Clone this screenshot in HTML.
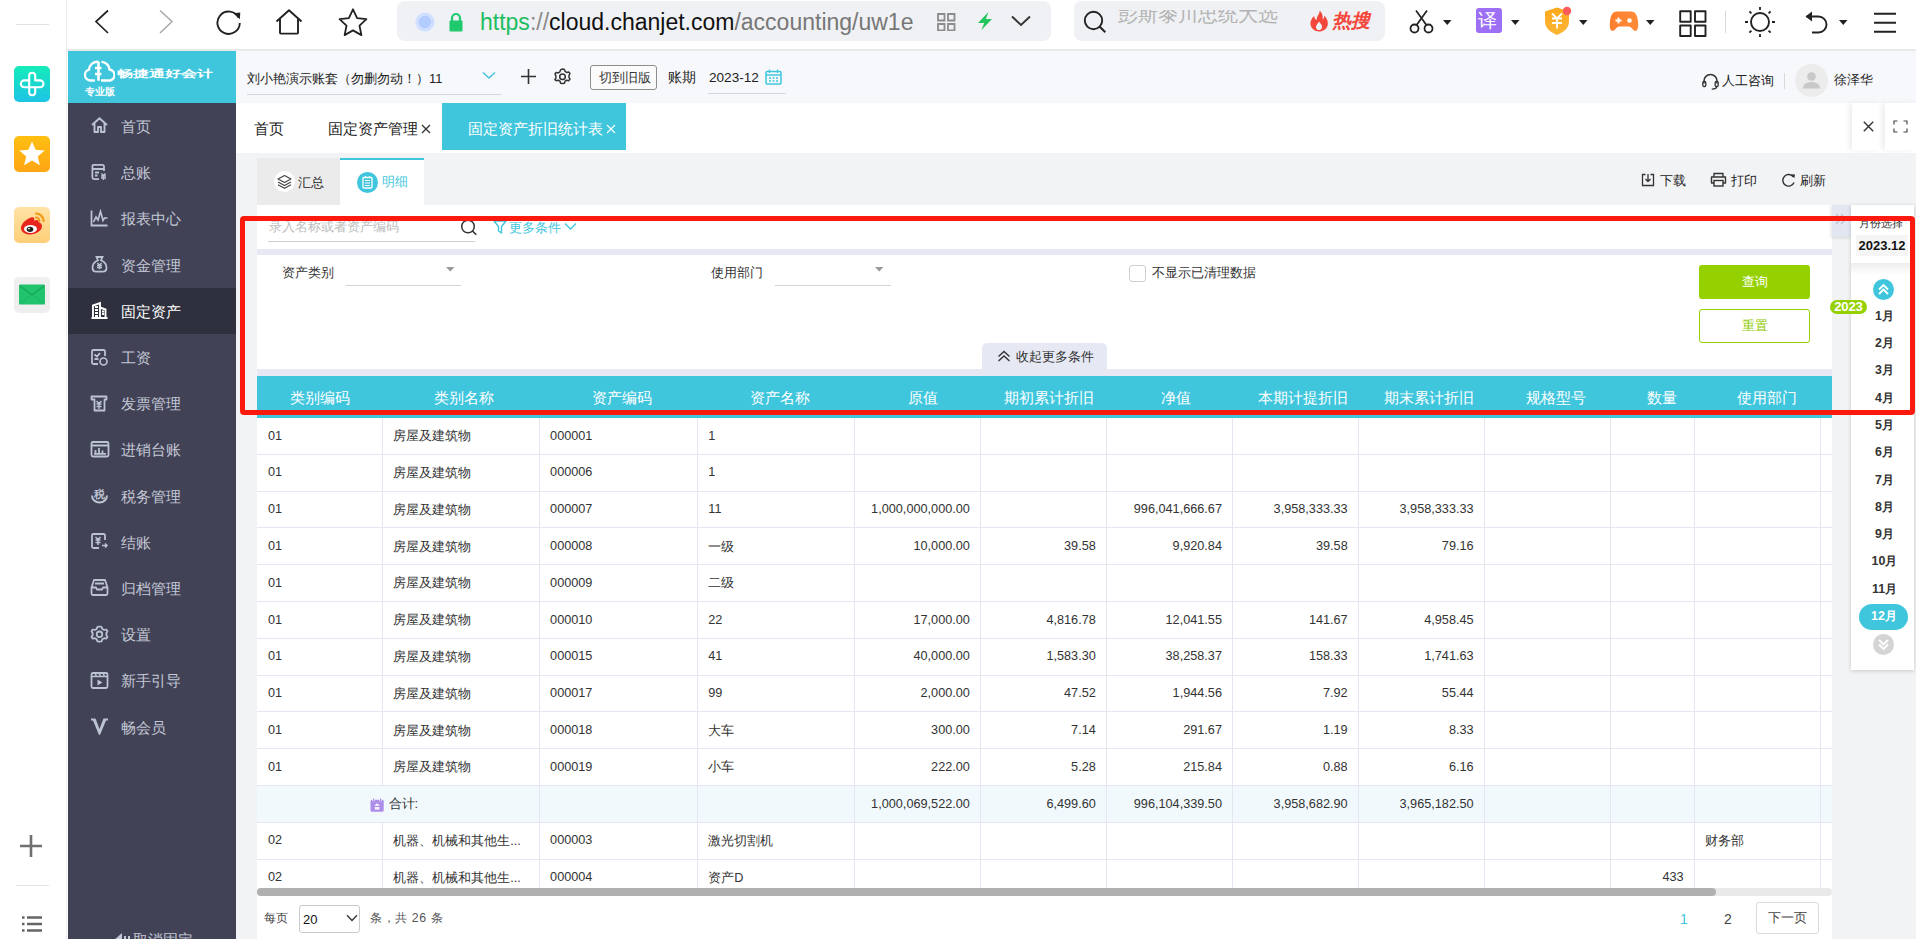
<!DOCTYPE html><html><head><meta charset="utf-8"><style>
*{margin:0;padding:0;box-sizing:border-box}
html,body{width:1916px;height:939px;overflow:hidden;background:#fff;font-family:"Liberation Sans",sans-serif}
.a{position:absolute;display:block}
.t{position:absolute;white-space:nowrap}
</style></head><body>

<div class="a" style="left:0px;top:0px;width:66px;height:939px;background:#fff"></div>
<div class="a" style="left:66px;top:0px;width:1px;height:939px;background:#ececec"></div>
<div class="a" style="left:16px;top:24px;width:33px;height:1px;background:#e3e3e3"></div>
<svg class="a" style="left:14px;top:66px;" width="36" height="36" viewBox="0 0 36 36" fill="none"><defs><linearGradient id="g1" x1="0" y1="0" x2="0" y2="1"><stop offset="0" stop-color="#14ecb9"/><stop offset="1" stop-color="#1ec3e6"/></linearGradient></defs>
<rect width="36" height="36" rx="5" fill="url(#g1)"/>
<path d="M15.2 14.4H10.2A3.4 3.4 0 0 0 10.2 21.2H26.1A3.4 3.4 0 0 0 26.1 14.4H21.2V9.7A3 3 0 0 0 15.2 9.7V26.2A3 3 0 0 0 21.2 26.2V21.2" stroke="#fff" stroke-width="2.1" stroke-linejoin="round"/></svg>
<svg class="a" style="left:14px;top:136px;" width="36" height="36" viewBox="0 0 36 36" fill="none"><defs><linearGradient id="g2" x1="0" y1="0" x2="0" y2="1"><stop offset="0" stop-color="#ffbf10"/><stop offset="1" stop-color="#ffa516"/></linearGradient></defs>
<rect width="36" height="36" rx="5" fill="url(#g2)"/>
<path d="M18 5.5l3.6 8.3 9 .8-6.8 5.9 2.1 8.8L18 24.6l-7.9 4.7 2.1-8.8-6.8-5.9 9-.8z" fill="#fff"/></svg>
<svg class="a" style="left:14px;top:207px;" width="36" height="36" viewBox="0 0 36 36" fill="none"><defs><linearGradient id="g3" x1="0" y1="0" x2="0" y2="1"><stop offset="0" stop-color="#ffe3a6"/><stop offset="1" stop-color="#ffcf78"/></linearGradient></defs>
<rect width="36" height="36" rx="5" fill="url(#g3)"/>
<path d="M7 21c0-4 5-9 10-10.5 3-.8 4 .8 3 3.2 3-1.2 5-.6 4.6 1.6 2.4.6 3.4 2 3.4 3.8C28 24 22 27.5 16 27.5 11 27.5 7 25 7 21z" fill="#e8251c"/>
<ellipse cx="16.5" cy="22" rx="6.5" ry="4" fill="#fff"/>
<ellipse cx="16" cy="22.3" rx="3.3" ry="2.6" fill="#222"/>
<circle cx="15" cy="21.6" r="0.9" fill="#fff"/>
<path d="M22 6.5c4 0 7.5 3.2 7.5 7.5" stroke="#f39a18" stroke-width="2.2" stroke-linecap="round"/>
<path d="M22 10.5c1.8 0 3.4 1.4 3.4 3.4" stroke="#f39a18" stroke-width="2" stroke-linecap="round"/></svg>
<svg class="a" style="left:14px;top:277px;" width="36" height="36" viewBox="0 0 36 36" fill="none"><rect width="36" height="36" rx="5" fill="#efefef"/>
<rect x="5" y="7.5" width="26" height="20" rx="1.5" fill="#21c46c"/>
<path d="M5.5 8.5l12.5 9.5 12.5-9.5" stroke="#15a458" stroke-width="1.2"/>
<path d="M5.5 27l10-8M30.5 27l-10-8" stroke="#1cb562" stroke-width="1"/></svg>
<svg class="a" style="left:20px;top:835px;" width="22" height="22" viewBox="0 0 22 22" fill="none"><path d="M11 0v22M0 11h22" stroke="#707070" stroke-width="2.6"/></svg>
<div class="a" style="left:16px;top:885px;width:33px;height:1px;background:#e3e3e3"></div>
<svg class="a" style="left:22px;top:916px;" width="20" height="16" viewBox="0 0 20 16" fill="none"><path d="M0 1.5h2.5M0 8h2.5M0 14.5h2.5M5 1.5h15M5 8h15M5 14.5h15" stroke="#666" stroke-width="2.4"/></svg>
<div class="a" style="left:67px;top:0px;width:1849px;height:49px;background:#fff"></div>
<div class="a" style="left:67px;top:49px;width:1849px;height:2px;background:#e9e9e9"></div>
<svg class="a" style="left:90px;top:8px;" width="24" height="28" viewBox="0 0 24 28" fill="none"><path d="M18 2.5L6 13.5 18 25" stroke="#222" stroke-width="1.7"/></svg>
<svg class="a" style="left:154px;top:8px;" width="24" height="28" viewBox="0 0 24 28" fill="none"><path d="M6 2.5L18 13.5 6 25" stroke="#a8a8a8" stroke-width="1.5"/></svg>
<svg class="a" style="left:213px;top:8px;" width="30" height="28" viewBox="0 0 30 28" fill="none"><path d="M25.5 9.5A11.2 11.2 0 1 0 26.8 15" stroke="#222" stroke-width="1.9"/><path d="M20.5 5.2l6.8-.8-.4 6.9z" fill="#222"/></svg>
<svg class="a" style="left:273px;top:8px;" width="32" height="28" viewBox="0 0 32 28" fill="none"><path d="M3.5 13.5L16 2.2l12.5 11.3M7 11v13.8c0 .5.3.8.8.8h16.4c.5 0 .8-.3.8-.8V11" stroke="#222" stroke-width="1.9" stroke-linejoin="round"/></svg>
<svg class="a" style="left:337px;top:7px;" width="32" height="30" viewBox="0 0 32 30" fill="none"><path d="M16 2.3l4.1 8.8 9.3 1.1-6.9 6.5 1.9 9.4L16 23.4l-8.4 4.7 1.9-9.4-6.9-6.5 9.3-1.1z" stroke="#222" stroke-width="1.8" stroke-linejoin="round"/></svg>
<div class="a" style="left:397px;top:1px;width:654px;height:40px;background:#f0f1f4;border-radius:8px"></div>
<svg class="a" style="left:414px;top:11px;" width="22" height="22" viewBox="0 0 22 22" fill="none"><circle cx="11" cy="11" r="10" fill="#dce7ff"/><circle cx="11" cy="11" r="8" stroke="#c3d6ff" stroke-width="1"/><circle cx="11" cy="11" r="6.5" fill="#b3ccff"/></svg>
<svg class="a" style="left:448px;top:11px;" width="16" height="22" viewBox="0 0 16 22" fill="none"><path d="M4 10V7a4 4 0 0 1 8 0v3" stroke="#1fc96e" stroke-width="2.2"/><rect x="1.5" y="9.5" width="13" height="11" rx="1" fill="#1fc96e"/></svg>
<div class="t " style="left:480px;top:9px;font-size:23px;line-height:26px;color:#111;width:439px;overflow:hidden;letter-spacing:0px"><span style="color:#1cbd60">https</span><span style="color:#8a8a8a">://</span><span style="color:#111">cloud.chanjet.com</span><span style="color:#777">/accounting/uw1e</span></div>
<svg class="a" style="left:937px;top:13px;" width="19" height="18" viewBox="0 0 19 18" fill="none"><path d="M1 1h6.5v6.5H1zM11 1h6.5v6.5H11zM1 11h6.5v6.5H1zM11 11h6.5v6.5H11z" stroke="#8c8c8c" stroke-width="1.8"/></svg>
<svg class="a" style="left:975px;top:11px;" width="20" height="20" viewBox="0 0 20 20" fill="none"><path d="M13.5 1L3 12h6.2L6.5 19 17 8h-6.2z" fill="#22c55e"/></svg>
<svg class="a" style="left:1010px;top:14px;" width="22" height="14" viewBox="0 0 22 14" fill="none"><path d="M2 2.5l9 8.5 9-8.5" stroke="#333" stroke-width="1.9"/></svg>
<div class="a" style="left:1074px;top:1px;width:311px;height:40px;background:#f0f1f4;border-radius:8px"></div>
<svg class="a" style="left:1082px;top:9px;" width="26" height="26" viewBox="0 0 26 26" fill="none"><circle cx="11.5" cy="11.5" r="8.7" stroke="#222" stroke-width="1.9"/><path d="M17.8 17.8l5.5 5.5" stroke="#222" stroke-width="2"/></svg>
<div class="a" style="left:1114px;top:9.5px;width:170px;height:16px;overflow:hidden"><div class="t" style="left:3.5px;top:-6.5px;font-size:19.5px;line-height:22px;color:#b3b3b3">彭斯黍川忠统大选</div></div>
<svg class="a" style="left:1307px;top:9px;" width="24" height="24" viewBox="0 0 24 24" fill="none"><path d="M12.5 1.5c.8 3.8-3.4 5.3-2.6 9.5-2.3-.6-2.8-2.8-2.6-4.3C4.6 9.2 3 12.6 3.5 15.6 4.2 20 8 22.5 12 22.5s8.2-2.6 8.8-7c.6-4.6-2.2-7.6-3.6-9.1.1 1.8-.4 3.3-1.5 4 .5-4-1-7.4-3.2-8.9zm-.4 11c1 2 3.3 3 2.9 6-.3 1.6-1.6 2.6-3 2.6s-2.8-1-3-2.6c-.3-2.4 1.8-3.6 3.1-6z" fill="#f4473b"/></svg>
<div class="t " style="left:1332px;top:10px;font-size:19px;line-height:22px;color:#f4473b;font-weight:bold;font-style:italic">热搜</div>
<svg class="a" style="left:1409px;top:9px;" width="28" height="26" viewBox="0 0 28 26" fill="none"><circle cx="5.5" cy="19.5" r="4" stroke="#222" stroke-width="1.8"/><circle cx="19.5" cy="19.5" r="4" stroke="#222" stroke-width="1.8"/><path d="M7.6 16L18 1.5M17.4 16L7 1.5" stroke="#222" stroke-width="1.7"/></svg>
<svg class="a" style="left:1443px;top:20px;" width="9" height="6" viewBox="0 0 9 6" fill="none"><path d="M0 0h8.5L4.25 5z" fill="#222"/></svg>
<div class="a" style="left:1476px;top:8px;width:26px;height:25px;background:#9d6ff5;border-radius:3px"></div>
<div class="t " style="left:1478px;top:10px;font-size:19px;line-height:21px;color:#fff;">译</div>
<svg class="a" style="left:1511px;top:20px;" width="9" height="6" viewBox="0 0 9 6" fill="none"><path d="M0 0h8.5L4.25 5z" fill="#222"/></svg>
<svg class="a" style="left:1543px;top:6px;" width="30" height="30" viewBox="0 0 30 30" fill="none"><defs><linearGradient id="g4" x1="0" y1="0" x2="0" y2="1"><stop offset="0" stop-color="#ffa91c"/><stop offset="1" stop-color="#fbb535"/></linearGradient></defs><path d="M2 5.5L14 1.5l12 4v10c0 7-6 11-12 13.5C8 26.5 2 22.5 2 15.5z" fill="url(#g4)"/><path d="M9 7.5l5 5 5-5M9 12.5h10M9 17h10M14 12.5v10" stroke="#fff" stroke-width="1.8"/><circle cx="24" cy="5" r="4.2" fill="#ff5b5b"/></svg>
<svg class="a" style="left:1579px;top:20px;" width="9" height="6" viewBox="0 0 9 6" fill="none"><path d="M0 0h8.5L4.25 5z" fill="#222"/></svg>
<svg class="a" style="left:1609px;top:10px;" width="30" height="23" viewBox="0 0 30 23" fill="none"><defs><linearGradient id="g5" x1="0" y1="0" x2="1" y2="0"><stop offset="0" stop-color="#ff7e2e"/><stop offset="1" stop-color="#ff8c3a"/></linearGradient></defs><path d="M8 1.5h14c4 0 6 3 6.8 8.5.8 5.5.5 11-2.5 11-2.3 0-3.8-4.5-6.3-4.5H10c-2.5 0-4 4.5-6.3 4.5-3 0-3.3-5.5-2.5-11C2 4.5 4 1.5 8 1.5z" fill="url(#g5)"/><path d="M6.5 10.5h6M9.5 7.5v6" stroke="#fff" stroke-width="1.9"/><circle cx="20.5" cy="10.5" r="2.3" fill="#fff"/></svg>
<svg class="a" style="left:1646px;top:20px;" width="9" height="6" viewBox="0 0 9 6" fill="none"><path d="M0 0h8.5L4.25 5z" fill="#222"/></svg>
<svg class="a" style="left:1679px;top:10px;" width="28" height="27" viewBox="0 0 28 27" fill="none"><path d="M1.2 1.2h10.5v10.5H1.2zM16 1.2h10.5v10.5H16zM1.2 15.5h10.5V26H1.2zM16 15.5h10.5V26H16z" stroke="#222" stroke-width="1.9" stroke-linejoin="round"/></svg>
<div class="a" style="left:1725px;top:11px;width:1px;height:22px;background:#d8d8d8"></div>
<svg class="a" style="left:1745px;top:7px;" width="30" height="30" viewBox="0 0 30 30" fill="none"><circle cx="15" cy="15" r="9" stroke="#222" stroke-width="1.9"/><path d="M15 0v3M15 27v3M0 15h3M27 15h3M4.4 4.4l2 2M23.6 23.6l2 2M4.4 25.6l2-2M23.6 6.4l2-2" stroke="#222" stroke-width="1.8"/></svg>
<svg class="a" style="left:1803px;top:9px;" width="28" height="26" viewBox="0 0 28 26" fill="none"><path d="M3.5 7.5h12a8 8 0 0 1 0 16H9" stroke="#222" stroke-width="1.9"/><path d="M9 2.5L2.5 7.5 9 12.5z" fill="#222"/></svg>
<svg class="a" style="left:1839px;top:20px;" width="9" height="6" viewBox="0 0 9 6" fill="none"><path d="M0 0h8.5L4.25 5z" fill="#222"/></svg>
<svg class="a" style="left:1873px;top:12px;" width="24" height="22" viewBox="0 0 24 22" fill="none"><path d="M1 1.8h22M1 10.8h22M1 19.8h22" stroke="#222" stroke-width="1.9"/></svg>
<div class="a" style="left:68px;top:51px;width:168px;height:888px;background:#424257"></div>
<div class="a" style="left:68px;top:51px;width:168px;height:52px;background:#3fc6dd"></div>
<svg class="a" style="left:84px;top:60px;" width="31" height="22" viewBox="0 0 31 22" fill="none"><path d="M8 20.5H6.5A5.5 5.5 0 0 1 5 9.7 8.5 8.5 0 0 1 14.5 1.8M17.5 1.8A8.5 8.5 0 0 1 25.5 9.5 5.5 5.5 0 0 1 24.5 20.5H17" stroke="#fff" stroke-width="2.3"/><path d="M14.5 1.8v19M11 8h6.5M11 14h6.5" stroke="#fff" stroke-width="2.6"/><path d="M8 20.5h3" stroke="#fff" stroke-width="2.3"/></svg>
<div class="t " style="left:117px;top:64px;font-size:16.2px;line-height:18px;color:#fff;font-weight:bold;letter-spacing:0px;transform:scaleY(0.62);transform-origin:0 50%">畅捷通好会计</div>
<div class="t " style="left:85px;top:86px;font-size:10px;line-height:12px;color:#fff;font-weight:bold">专业版</div>
<svg class="a" style="left:90px;top:116px;" width="20" height="19" viewBox="0 0 20 19" fill="none"><path d="M2 9L9.5 2.2 17 9M4.5 7v9h3.5v-5h3v5h3.5V7" stroke="#bcc4d2" stroke-width="1.89" stroke-linejoin="round"/></svg>
<div class="t " style="left:121px;top:119.0px;font-size:14.7px;line-height:16px;color:#c3c8d4;">首页</div>
<svg class="a" style="left:90px;top:163px;" width="20" height="19" viewBox="0 0 20 19" fill="none"><path d="M14 8V3.5c0-1-.6-1.6-1.6-1.6H4c-1 0-1.6.6-1.6 1.6v11c0 1 .6 1.6 1.6 1.6h5M2.5 6h11.5M5 9.5h4M5 12.5h2.5" stroke="#bcc4d2" stroke-width="1.77"/><path d="M11.5 10.5l2 2 2-2M11 13h5M11 15h5M13.5 12.5V17" stroke="#bcc4d2" stroke-width="1.42"/></svg>
<div class="t " style="left:121px;top:165.2px;font-size:14.7px;line-height:16px;color:#c3c8d4;">总账</div>
<svg class="a" style="left:90px;top:209px;" width="20" height="19" viewBox="0 0 20 19" fill="none"><path d="M1.5 1.5v15h16" stroke="#bcc4d2" stroke-width="1.77"/><path d="M3.5 13l2.5-5 2 3 2.5-8.5 2.5 9 1.5-2.5h3" stroke="#bcc4d2" stroke-width="1.65"/></svg>
<div class="t " style="left:121px;top:211.4px;font-size:14.7px;line-height:16px;color:#c3c8d4;">报表中心</div>
<svg class="a" style="left:90px;top:255px;" width="20" height="19" viewBox="0 0 20 19" fill="none"><path d="M6.5 2h6l-1.5 3.2c3.5 1.5 5.5 4.5 5.5 7.5 0 2.5-1.6 4-4 4H6.5c-2.4 0-4-1.5-4-4 0-3 2-6 5.5-7.5z" stroke="#bcc4d2" stroke-width="1.77"/><path d="M7.5 8l2 2.2 2-2.2M7 10.5h5M7 12.5h5M9.5 10.2v4" stroke="#bcc4d2" stroke-width="1.42"/></svg>
<div class="t " style="left:121px;top:257.6px;font-size:14.7px;line-height:16px;color:#c3c8d4;">资金管理</div>
<div class="a" style="left:68px;top:287.8px;width:168px;height:46.2px;background:#2f303e"></div>
<svg class="a" style="left:90px;top:301px;" width="20" height="19" viewBox="0 0 20 19" fill="none"><path d="M3 17V4.5L10 2v15M10 6.5l5.5 2V17M1.5 17h16M5 6h3M5 9h3M5 12h3M12 10.5h2M12 13h2M5 15h3" stroke="#fff" stroke-width="1.89"/></svg>
<div class="t " style="left:121px;top:303.8px;font-size:14.7px;line-height:16px;color:#fff;">固定资产</div>
<svg class="a" style="left:90px;top:348px;" width="20" height="19" viewBox="0 0 20 19" fill="none"><path d="M15 8V3.5c0-1-.6-1.5-1.5-1.5h-10C2.5 2 2 2.5 2 3.5v11c0 1 .5 1.5 1.5 1.5H8M4.5 6.5l2.5 2 3-3.5M4.5 11h4" stroke="#bcc4d2" stroke-width="1.77"/><circle cx="13.5" cy="13.5" r="3.5" stroke="#bcc4d2" stroke-width="1.65"/></svg>
<div class="t " style="left:121px;top:350.0px;font-size:14.7px;line-height:16px;color:#c3c8d4;">工资</div>
<svg class="a" style="left:90px;top:394px;" width="20" height="19" viewBox="0 0 20 19" fill="none"><path d="M1.5 2.5h15v3h-2v11H4.5v-11h-3z" stroke="#bcc4d2" stroke-width="1.77" stroke-linejoin="round"/><path d="M6.5 7l2.5 2.5L11.5 7M6.5 10h5M6.5 12.5h5M9 9.5V15" stroke="#bcc4d2" stroke-width="1.42"/></svg>
<div class="t " style="left:121px;top:396.20000000000005px;font-size:14.7px;line-height:16px;color:#c3c8d4;">发票管理</div>
<svg class="a" style="left:90px;top:440px;" width="20" height="19" viewBox="0 0 20 19" fill="none"><rect x="1.5" y="2" width="17" height="14.5" rx="1.5" stroke="#bcc4d2" stroke-width="1.77"/><path d="M1.5 5.5h17M5.5 13.5V10M9 13.5V8M12.5 13.5v-3M4 13.8h12" stroke="#bcc4d2" stroke-width="1.77"/></svg>
<div class="t " style="left:121px;top:442.40000000000003px;font-size:14.7px;line-height:16px;color:#c3c8d4;">进销台账</div>
<svg class="a" style="left:90px;top:486px;" width="20" height="19" viewBox="0 0 20 19" fill="none"><path d="M2 9.5c0 4 3.2 7 7.5 7s7.5-3 7.5-7" stroke="#bcc4d2" stroke-width="1.9"/><text x="9.6" y="11.5" font-size="10.5" font-weight="bold" text-anchor="middle" fill="#bcc4d2">税</text></svg>
<div class="t " style="left:121px;top:488.6px;font-size:14.7px;line-height:16px;color:#c3c8d4;">税务管理</div>
<svg class="a" style="left:90px;top:532px;" width="20" height="19" viewBox="0 0 20 19" fill="none"><path d="M15 8V3.5C15 2.5 14.5 2 13.5 2h-10C2.5 2 2 2.5 2 3.5v11c0 1 .5 1.5 1.5 1.5H9" stroke="#bcc4d2" stroke-width="1.77"/><path d="M5.5 5l2.5 2.5L10.5 5M5.5 8h5M5.5 10.5h5M8 8v5M12 13.5h5M15 11.5l2 2-2 2" stroke="#bcc4d2" stroke-width="1.53"/></svg>
<div class="t " style="left:121px;top:534.8px;font-size:14.7px;line-height:16px;color:#c3c8d4;">结账</div>
<svg class="a" style="left:90px;top:578px;" width="20" height="19" viewBox="0 0 20 19" fill="none"><path d="M1.5 9.5L4 2h11l2.5 7.5v6c0 1-.5 1.5-1.5 1.5H3c-1 0-1.5-.5-1.5-1.5z M1.5 9.5h4.5l1 2h5l1-2h4.5M5 5.5h9" stroke="#bcc4d2" stroke-width="1.77" stroke-linejoin="round"/></svg>
<div class="t " style="left:121px;top:581.0px;font-size:14.7px;line-height:16px;color:#c3c8d4;">归档管理</div>
<svg class="a" style="left:90px;top:625px;" width="20" height="19" viewBox="0 0 20 19" fill="none"><path d="M9.5 1.5l2 .4.8 2 1.9 1.1 2-.5 1.3 1.7-1.1 1.8v2.2l1.1 1.8-1.3 1.7-2-.5-1.9 1.1-.8 2-2 .4-2-.4-.8-2-1.9-1.1-2 .5L1.5 12l1.1-1.8V8L1.5 6.2l1.3-1.7 2 .5 1.9-1.1.8-2z" stroke="#bcc4d2" stroke-width="1.77" stroke-linejoin="round"/><circle cx="9.5" cy="9.3" r="2.8" stroke="#bcc4d2" stroke-width="1.77"/></svg>
<div class="t " style="left:121px;top:627.2px;font-size:14.7px;line-height:16px;color:#c3c8d4;">设置</div>
<svg class="a" style="left:90px;top:671px;" width="20" height="19" viewBox="0 0 20 19" fill="none"><rect x="1.5" y="2" width="16" height="15" rx="1.5" stroke="#bcc4d2" stroke-width="1.77"/><path d="M1.5 5.5h16M5 2l1.5 3.5M9 2l1.5 3.5M13 2l1.5 3.5" stroke="#bcc4d2" stroke-width="1.53"/><path d="M7.5 8.5v6l5-3z" fill="#bcc4d2"/></svg>
<div class="t " style="left:121px;top:673.4000000000001px;font-size:14.7px;line-height:16px;color:#c3c8d4;">新手引导</div>
<svg class="a" style="left:90px;top:717px;" width="20" height="19" viewBox="0 0 20 19" fill="none"><path d="M1 2.5h4l4.5 12 4.5-12h4M3.5 2.5l6 14.5 6-14.5" stroke="#bcc4d2" stroke-width="1.77" stroke-linejoin="round"/></svg>
<div class="t " style="left:121px;top:719.6px;font-size:14.7px;line-height:16px;color:#c3c8d4;">畅会员</div>
<div class="a" style="left:68px;top:925px;width:168px;height:14px;overflow:hidden"><svg class="a" style="left:45px;top:8px" width="20" height="16" viewBox="0 0 20 16"><path d="M0 8L9 0v16z" fill="#c3c8d4"/><rect x="11" y="3" width="2" height="3" fill="#c3c8d4"/><rect x="15" y="3" width="2" height="3" fill="#c3c8d4"/></svg><div class="t" style="left:65px;top:6.5px;font-size:14.7px;line-height:16px;color:#c3c8d4">取消固定</div></div>
<div class="a" style="left:236px;top:51px;width:1680px;height:52px;background:#f7f8fb"></div>
<div class="t " style="left:247px;top:71px;font-size:12.9px;line-height:15px;color:#222;">刘小艳演示账套（勿删勿动！）11</div>
<div class="a" style="left:247px;top:94px;width:255px;height:1px;background:#d5d7dc"></div>
<svg class="a" style="left:482px;top:71px;" width="14" height="9" viewBox="0 0 14 9" fill="none"><path d="M1 1.5l6 5.5 6-5.5" stroke="#3fc6dd" stroke-width="1.5"/></svg>
<svg class="a" style="left:521px;top:69px;" width="15" height="15" viewBox="0 0 15 15" fill="none"><path d="M7.5 0v15M0 7.5h15" stroke="#333" stroke-width="1.6"/></svg>
<svg class="a" style="left:553px;top:68px;" width="19" height="18" viewBox="0 0 19 18" fill="none"><path d="M9.5 1l1.9.4.6 2 1.7 1 2-.5 1.3 1.6-1 1.8v2l1 1.8-1.3 1.6-2-.5-1.7 1-.6 2-1.9.4-1.9-.4-.6-2-1.7-1-2 .5L1.9 11.6l1-1.8v-2l-1-1.8L3.2 4.4l2 .5 1.7-1 .6-2z" stroke="#333" stroke-width="1.5" stroke-linejoin="round"/><circle cx="9.5" cy="8.8" r="2.8" stroke="#333" stroke-width="1.5"/></svg>
<div class="a" style="left:590px;top:65px;width:67px;height:25px;border:1px solid #8e8e8e;border-radius:3px;background:#fbfbfc"></div>
<div class="t " style="left:599px;top:70.5px;font-size:12.6px;line-height:15px;color:#333;">切到旧版</div>
<div class="t " style="left:668px;top:69px;font-size:14px;line-height:16px;color:#222;">账期</div>
<div class="t " style="left:709px;top:69.5px;font-size:13.6px;line-height:16px;color:#222;">2023-12</div>
<div class="a" style="left:708px;top:93px;width:78px;height:1px;background:#d5d7dc"></div>
<svg class="a" style="left:765px;top:69px;" width="17" height="16" viewBox="0 0 17 16" fill="none"><rect x="1" y="2.5" width="15" height="12.5" rx="1" stroke="#3fc6dd" stroke-width="1.5"/><path d="M1 6h15M4.5 0.5v3.5M12.5 .5v3.5M4 9h2M7.5 9h2M11 9h2M4 12h2M7.5 12h2M11 12h2" stroke="#3fc6dd" stroke-width="1.3"/></svg>
<svg class="a" style="left:1702px;top:73px;" width="17" height="17" viewBox="0 0 17 17" fill="none"><path d="M2 10.5V8a6.5 6.5 0 0 1 13 0v2.5" stroke="#333" stroke-width="1.5"/><rect x="0.8" y="8.5" width="3" height="5" rx="1.2" stroke="#333" stroke-width="1.3"/><rect x="13.2" y="8.5" width="3" height="5" rx="1.2" stroke="#333" stroke-width="1.3"/><path d="M14.7 13.5c0 2-2 2.6-5 2.6" stroke="#333" stroke-width="1.3"/></svg>
<div class="t " style="left:1722px;top:73px;font-size:13px;line-height:15px;color:#222;">人工咨询</div>
<div class="a" style="left:1784px;top:73px;width:1px;height:16px;background:#d8d8d8"></div>
<div class="a" style="left:1795px;top:64px;width:33px;height:33px;border-radius:50%;background:#ececec;overflow:hidden"></div>
<svg class="a" style="left:1802px;top:71px;" width="19" height="18" viewBox="0 0 19 18" fill="none"><circle cx="9.5" cy="5.5" r="4.3" fill="#c8c8c8"/><path d="M1 17.5c0-4.2 3.5-6.5 8.5-6.5s8.5 2.3 8.5 6.5z" fill="#c8c8c8"/></svg>
<div class="t " style="left:1834px;top:72px;font-size:13px;line-height:15px;color:#222;">徐泽华</div>
<div class="a" style="left:236px;top:103px;width:1680px;height:50px;background:#fff"></div>
<div class="t " style="left:254px;top:121px;font-size:14.7px;line-height:16px;color:#222;">首页</div>
<div class="t " style="left:327.5px;top:121px;font-size:14.7px;line-height:16px;color:#222;">固定资产管理</div>
<svg class="a" style="left:421px;top:123.5px;" width="10" height="10" viewBox="0 0 10 10" fill="none"><path d="M1 1l8 8M9 1L1 9" stroke="#333" stroke-width="1.3"/></svg>
<div class="a" style="left:442px;top:103px;width:184px;height:47px;background:#3fc6dd"></div>
<div class="t " style="left:467.5px;top:121px;font-size:14.7px;line-height:16px;color:#fff;">固定资产折旧统计表</div>
<svg class="a" style="left:606px;top:123.5px;" width="10" height="10" viewBox="0 0 10 10" fill="none"><path d="M1 1l8 8M9 1L1 9" stroke="#fff" stroke-width="1.1"/></svg>
<div class="a" style="left:1852px;top:103px;width:28px;height:47px;background:#fff;box-shadow:-3px 0 5px rgba(0,0,0,0.07)"></div>
<svg class="a" style="left:1863px;top:121px;" width="11" height="11" viewBox="0 0 11 11" fill="none"><path d="M.8.8l9.4 9.4M10.2.8L.8 10.2" stroke="#333" stroke-width="1.4"/></svg>
<div class="a" style="left:1885px;top:103px;width:31px;height:47px;background:#fff;box-shadow:-3px 0 5px rgba(0,0,0,0.07)"></div>
<svg class="a" style="left:1893px;top:120px;" width="15" height="13" viewBox="0 0 15 13" fill="none"><path d="M1 4.5V1h3.5M10.5 1H14v3.5M14 8.5V12h-3.5M4.5 12H1V8.5" stroke="#444" stroke-width="1.15"/></svg>
<div class="a" style="left:236px;top:153px;width:1680px;height:786px;background:#f2f3f5"></div>
<div class="a" style="left:257px;top:158px;width:83px;height:47px;background:#ebebeb"></div>
<div class="a" style="left:340px;top:158px;width:84px;height:47px;background:#fff;border-top:2px solid #3fc6dd"></div>
<div class="a" style="left:274px;top:171px;width:21px;height:21px;border-radius:50%;background:#fff"></div>
<svg class="a" style="left:277px;top:174px;" width="15" height="15" viewBox="0 0 15 15" fill="none"><path d="M7.5 1.5L14 5 7.5 8.5 1 5z" stroke="#444" stroke-width="1.2" stroke-linejoin="round"/><path d="M1 8l6.5 3.5L14 8M1 10.8l6.5 3.5 6.5-3.5" stroke="#444" stroke-width="1.2" stroke-linejoin="round"/></svg>
<div class="t " style="left:298px;top:174.5px;font-size:12.9px;line-height:15px;color:#222;">汇总</div>
<div class="a" style="left:357px;top:172px;width:21px;height:21px;border-radius:50%;background:#3fc6dd"></div>
<svg class="a" style="left:362px;top:176px;" width="11" height="13" viewBox="0 0 11 13" fill="none"><rect x="1" y="1.5" width="9" height="10.5" rx="1" stroke="#fff" stroke-width="1.3"/><path d="M3 4.5h5M3 7h5M3 9.5h5M3.5 0v2M7.5 0v2" stroke="#fff" stroke-width="1.1"/></svg>
<div class="t " style="left:381.5px;top:174.5px;font-size:12.6px;line-height:15px;color:#3fc6dd;">明细</div>
<svg class="a" style="left:1641px;top:173px;" width="14" height="14" viewBox="0 0 14 14" fill="none"><path d="M4.5 1.5H1.5v11h11v-11h-3M7 1v7.5M4.5 6L7 8.5 9.5 6" stroke="#333" stroke-width="1.3"/></svg>
<div class="t " style="left:1660px;top:173.5px;font-size:12.6px;line-height:15px;color:#222;">下载</div>
<svg class="a" style="left:1710px;top:172px;" width="17" height="15" viewBox="0 0 17 15" fill="none"><path d="M4 5V1.5h9V5M4 11H1.5V5h14v6H13" stroke="#333" stroke-width="1.4" stroke-linejoin="round"/><rect x="4" y="8.5" width="9" height="5.5" stroke="#333" stroke-width="1.4"/></svg>
<div class="t " style="left:1730.5px;top:173.5px;font-size:12.6px;line-height:15px;color:#222;">打印</div>
<svg class="a" style="left:1781px;top:173px;" width="15" height="14" viewBox="0 0 15 14" fill="none"><path d="M12.5 4.2A5.8 5.8 0 1 0 13 9.5" stroke="#333" stroke-width="1.4"/><path d="M10 1.2l4 .2-.6 3.9z" fill="#333"/></svg>
<div class="t " style="left:1799.5px;top:173.5px;font-size:12.6px;line-height:15px;color:#222;">刷新</div>
<div class="a" style="left:257px;top:205px;width:1575px;height:734px;background:#fff"></div>
<div class="a" style="left:268px;top:217px;width:180px;height:24px;overflow:hidden"><div class="t" style="left:1px;top:2.5px;font-size:12.7px;line-height:15px;color:#bdbdbd">录入名称或者资产编码</div></div>
<div class="a" style="left:268px;top:241px;width:207px;height:1px;background:#cfcfcf"></div>
<svg class="a" style="left:460px;top:219px;" width="19" height="17" viewBox="0 0 19 17" fill="none"><circle cx="8" cy="7.5" r="6.3" stroke="#333" stroke-width="1.5"/><path d="M12.5 12l3.8 3.8" stroke="#333" stroke-width="1.6"/></svg>
<svg class="a" style="left:493px;top:220px;" width="14" height="14" viewBox="0 0 14 14" fill="none"><path d="M1 1h12L8.5 6.5V13L5.5 11V6.5z" stroke="#3fc6dd" stroke-width="1.4" stroke-linejoin="round"/></svg>
<div class="t " style="left:509px;top:220px;font-size:13px;line-height:15px;color:#3fc6dd;">更多条件</div>
<svg class="a" style="left:564px;top:222px;" width="13" height="9" viewBox="0 0 13 9" fill="none"><path d="M1 1.5L6.5 7 12 1.5" stroke="#3fc6dd" stroke-width="1.4"/></svg>
<div class="a" style="left:257px;top:249px;width:1575px;height:6px;background:#e6e9f3"></div>
<div class="t " style="left:281.5px;top:266px;font-size:12.6px;line-height:15px;color:#333;">资产类别</div>
<div class="a" style="left:346px;top:285px;width:115px;height:1px;background:#d4d4d4"></div>
<svg class="a" style="left:446px;top:267px;" width="9" height="6" viewBox="0 0 9 6" fill="none"><path d="M0 0h8.5L4.25 4.5z" fill="#9a9a9a"/></svg>
<div class="t " style="left:710.5px;top:266px;font-size:12.6px;line-height:15px;color:#333;">使用部门</div>
<div class="a" style="left:775px;top:285px;width:116px;height:1px;background:#d4d4d4"></div>
<svg class="a" style="left:875px;top:267px;" width="9" height="6" viewBox="0 0 9 6" fill="none"><path d="M0 0h8.5L4.25 4.5z" fill="#9a9a9a"/></svg>
<div class="a" style="left:1129px;top:265px;width:17px;height:17px;border:1px solid #cfcfcf;border-radius:3px;background:#fff"></div>
<div class="t " style="left:1152px;top:266px;font-size:12.5px;line-height:15px;color:#333;">不显示已清理数据</div>
<div class="a" style="left:1699px;top:265px;width:111px;height:34px;background:#95d100;border-radius:3px"></div>
<div class="t " style="left:1699px;top:274px;font-size:13px;line-height:15px;color:#fff;width:111px;text-align:center">查询</div>
<div class="a" style="left:1699px;top:309px;width:111px;height:34px;border:1px solid #95d100;border-radius:3px;background:#fff"></div>
<div class="t " style="left:1699px;top:318px;font-size:13px;line-height:15px;color:#8fc900;width:111px;text-align:center">重置</div>
<div class="a" style="left:982px;top:343px;width:125px;height:26px;background:#e6e9f3;border-radius:5px 5px 0 0"></div>
<svg class="a" style="left:997px;top:350px;" width="14" height="12" viewBox="0 0 14 12" fill="none"><path d="M1.5 6.5L7 1.5l5.5 5M1.5 11L7 6l5.5 5" stroke="#333" stroke-width="1.4"/></svg>
<div class="t " style="left:1016px;top:349.5px;font-size:12.6px;line-height:15px;color:#333;">收起更多条件</div>
<div class="a" style="left:257px;top:369px;width:1575px;height:7px;background:#e6e9f3"></div>
<div class="a" style="left:257px;top:376px;width:1575px;height:42px;background:#3fc6dd"></div>
<div class="t " style="left:260.25px;top:389px;font-size:15px;line-height:17px;color:#fff;width:120px;text-align:center">类别编码</div>
<div class="t " style="left:403.5px;top:389px;font-size:15px;line-height:17px;color:#fff;width:120px;text-align:center">类别名称</div>
<div class="t " style="left:561.5px;top:389px;font-size:15px;line-height:17px;color:#fff;width:120px;text-align:center">资产编码</div>
<div class="t " style="left:720px;top:389px;font-size:15px;line-height:17px;color:#fff;width:120px;text-align:center">资产名称</div>
<div class="t " style="left:862.7px;top:389px;font-size:15px;line-height:17px;color:#fff;width:120px;text-align:center">原值</div>
<div class="t " style="left:989.2px;top:389px;font-size:15px;line-height:17px;color:#fff;width:120px;text-align:center">期初累计折旧</div>
<div class="t " style="left:1116.3px;top:389px;font-size:15px;line-height:17px;color:#fff;width:120px;text-align:center">净值</div>
<div class="t " style="left:1242.5px;top:389px;font-size:15px;line-height:17px;color:#fff;width:120px;text-align:center">本期计提折旧</div>
<div class="t " style="left:1369.3px;top:389px;font-size:15px;line-height:17px;color:#fff;width:120px;text-align:center">期末累计折旧</div>
<div class="t " style="left:1496.2px;top:389px;font-size:15px;line-height:17px;color:#fff;width:120px;text-align:center">规格型号</div>
<div class="t " style="left:1601.7px;top:389px;font-size:15px;line-height:17px;color:#fff;width:120px;text-align:center">数量</div>
<div class="t " style="left:1706.9px;top:389px;font-size:15px;line-height:17px;color:#fff;width:120px;text-align:center">使用部门</div>
<div class="a" style="left:257px;top:417.6px;width:1575px;height:470.4px;overflow:hidden">
<div class="t" style="left:11.0px;top:11.00px;font-size:12.7px;line-height:15px;color:#333">01</div>
<div class="t" style="left:136.2px;top:11.60px;font-size:12.7px;line-height:15px;color:#333">房屋及建筑物</div>
<div class="t" style="left:293.1px;top:11.00px;font-size:12.7px;line-height:15px;color:#333">000001</div>
<div class="t" style="left:451.3px;top:11.00px;font-size:12.7px;line-height:15px;color:#333">1</div>
<div class="a" style="left:0;top:36.30px;width:1575px;height:1px;background:#e4e7f2"></div>
<div class="t" style="left:11.0px;top:47.80px;font-size:12.7px;line-height:15px;color:#333">01</div>
<div class="t" style="left:136.2px;top:48.40px;font-size:12.7px;line-height:15px;color:#333">房屋及建筑物</div>
<div class="t" style="left:293.1px;top:47.80px;font-size:12.7px;line-height:15px;color:#333">000006</div>
<div class="t" style="left:451.3px;top:47.80px;font-size:12.7px;line-height:15px;color:#333">1</div>
<div class="a" style="left:0;top:73.10px;width:1575px;height:1px;background:#e4e7f2"></div>
<div class="t" style="left:11.0px;top:84.60px;font-size:12.7px;line-height:15px;color:#333">01</div>
<div class="t" style="left:136.2px;top:85.20px;font-size:12.7px;line-height:15px;color:#333">房屋及建筑物</div>
<div class="t" style="left:293.1px;top:84.60px;font-size:12.7px;line-height:15px;color:#333">000007</div>
<div class="t" style="left:451.3px;top:84.60px;font-size:12.7px;line-height:15px;color:#333">11</div>
<div class="t" style="left:597.5px;top:84.60px;width:115.4px;text-align:right;font-size:12.7px;line-height:15px;color:#333">1,000,000,000.00</div>
<div class="t" style="left:849.6px;top:84.60px;width:115.4px;text-align:right;font-size:12.7px;line-height:15px;color:#333">996,041,666.67</div>
<div class="t" style="left:975.8px;top:84.60px;width:114.9px;text-align:right;font-size:12.7px;line-height:15px;color:#333">3,958,333.33</div>
<div class="t" style="left:1101.5px;top:84.60px;width:115.1px;text-align:right;font-size:12.7px;line-height:15px;color:#333">3,958,333.33</div>
<div class="a" style="left:0;top:109.90px;width:1575px;height:1px;background:#e4e7f2"></div>
<div class="t" style="left:11.0px;top:121.40px;font-size:12.7px;line-height:15px;color:#333">01</div>
<div class="t" style="left:136.2px;top:122.00px;font-size:12.7px;line-height:15px;color:#333">房屋及建筑物</div>
<div class="t" style="left:293.1px;top:121.40px;font-size:12.7px;line-height:15px;color:#333">000008</div>
<div class="t" style="left:451.3px;top:122.00px;font-size:12.7px;line-height:15px;color:#333">一级</div>
<div class="t" style="left:597.5px;top:121.40px;width:115.4px;text-align:right;font-size:12.7px;line-height:15px;color:#333">10,000.00</div>
<div class="t" style="left:723.7px;top:121.40px;width:115.1px;text-align:right;font-size:12.7px;line-height:15px;color:#333">39.58</div>
<div class="t" style="left:849.6px;top:121.40px;width:115.4px;text-align:right;font-size:12.7px;line-height:15px;color:#333">9,920.84</div>
<div class="t" style="left:975.8px;top:121.40px;width:114.9px;text-align:right;font-size:12.7px;line-height:15px;color:#333">39.58</div>
<div class="t" style="left:1101.5px;top:121.40px;width:115.1px;text-align:right;font-size:12.7px;line-height:15px;color:#333">79.16</div>
<div class="a" style="left:0;top:146.70px;width:1575px;height:1px;background:#e4e7f2"></div>
<div class="t" style="left:11.0px;top:158.20px;font-size:12.7px;line-height:15px;color:#333">01</div>
<div class="t" style="left:136.2px;top:158.80px;font-size:12.7px;line-height:15px;color:#333">房屋及建筑物</div>
<div class="t" style="left:293.1px;top:158.20px;font-size:12.7px;line-height:15px;color:#333">000009</div>
<div class="t" style="left:451.3px;top:158.80px;font-size:12.7px;line-height:15px;color:#333">二级</div>
<div class="a" style="left:0;top:183.50px;width:1575px;height:1px;background:#e4e7f2"></div>
<div class="t" style="left:11.0px;top:195.00px;font-size:12.7px;line-height:15px;color:#333">01</div>
<div class="t" style="left:136.2px;top:195.60px;font-size:12.7px;line-height:15px;color:#333">房屋及建筑物</div>
<div class="t" style="left:293.1px;top:195.00px;font-size:12.7px;line-height:15px;color:#333">000010</div>
<div class="t" style="left:451.3px;top:195.00px;font-size:12.7px;line-height:15px;color:#333">22</div>
<div class="t" style="left:597.5px;top:195.00px;width:115.4px;text-align:right;font-size:12.7px;line-height:15px;color:#333">17,000.00</div>
<div class="t" style="left:723.7px;top:195.00px;width:115.1px;text-align:right;font-size:12.7px;line-height:15px;color:#333">4,816.78</div>
<div class="t" style="left:849.6px;top:195.00px;width:115.4px;text-align:right;font-size:12.7px;line-height:15px;color:#333">12,041.55</div>
<div class="t" style="left:975.8px;top:195.00px;width:114.9px;text-align:right;font-size:12.7px;line-height:15px;color:#333">141.67</div>
<div class="t" style="left:1101.5px;top:195.00px;width:115.1px;text-align:right;font-size:12.7px;line-height:15px;color:#333">4,958.45</div>
<div class="a" style="left:0;top:220.30px;width:1575px;height:1px;background:#e4e7f2"></div>
<div class="t" style="left:11.0px;top:231.80px;font-size:12.7px;line-height:15px;color:#333">01</div>
<div class="t" style="left:136.2px;top:232.40px;font-size:12.7px;line-height:15px;color:#333">房屋及建筑物</div>
<div class="t" style="left:293.1px;top:231.80px;font-size:12.7px;line-height:15px;color:#333">000015</div>
<div class="t" style="left:451.3px;top:231.80px;font-size:12.7px;line-height:15px;color:#333">41</div>
<div class="t" style="left:597.5px;top:231.80px;width:115.4px;text-align:right;font-size:12.7px;line-height:15px;color:#333">40,000.00</div>
<div class="t" style="left:723.7px;top:231.80px;width:115.1px;text-align:right;font-size:12.7px;line-height:15px;color:#333">1,583.30</div>
<div class="t" style="left:849.6px;top:231.80px;width:115.4px;text-align:right;font-size:12.7px;line-height:15px;color:#333">38,258.37</div>
<div class="t" style="left:975.8px;top:231.80px;width:114.9px;text-align:right;font-size:12.7px;line-height:15px;color:#333">158.33</div>
<div class="t" style="left:1101.5px;top:231.80px;width:115.1px;text-align:right;font-size:12.7px;line-height:15px;color:#333">1,741.63</div>
<div class="a" style="left:0;top:257.10px;width:1575px;height:1px;background:#e4e7f2"></div>
<div class="t" style="left:11.0px;top:268.60px;font-size:12.7px;line-height:15px;color:#333">01</div>
<div class="t" style="left:136.2px;top:269.20px;font-size:12.7px;line-height:15px;color:#333">房屋及建筑物</div>
<div class="t" style="left:293.1px;top:268.60px;font-size:12.7px;line-height:15px;color:#333">000017</div>
<div class="t" style="left:451.3px;top:268.60px;font-size:12.7px;line-height:15px;color:#333">99</div>
<div class="t" style="left:597.5px;top:268.60px;width:115.4px;text-align:right;font-size:12.7px;line-height:15px;color:#333">2,000.00</div>
<div class="t" style="left:723.7px;top:268.60px;width:115.1px;text-align:right;font-size:12.7px;line-height:15px;color:#333">47.52</div>
<div class="t" style="left:849.6px;top:268.60px;width:115.4px;text-align:right;font-size:12.7px;line-height:15px;color:#333">1,944.56</div>
<div class="t" style="left:975.8px;top:268.60px;width:114.9px;text-align:right;font-size:12.7px;line-height:15px;color:#333">7.92</div>
<div class="t" style="left:1101.5px;top:268.60px;width:115.1px;text-align:right;font-size:12.7px;line-height:15px;color:#333">55.44</div>
<div class="a" style="left:0;top:293.90px;width:1575px;height:1px;background:#e4e7f2"></div>
<div class="t" style="left:11.0px;top:305.40px;font-size:12.7px;line-height:15px;color:#333">01</div>
<div class="t" style="left:136.2px;top:306.00px;font-size:12.7px;line-height:15px;color:#333">房屋及建筑物</div>
<div class="t" style="left:293.1px;top:305.40px;font-size:12.7px;line-height:15px;color:#333">000018</div>
<div class="t" style="left:451.3px;top:306.00px;font-size:12.7px;line-height:15px;color:#333">大车</div>
<div class="t" style="left:597.5px;top:305.40px;width:115.4px;text-align:right;font-size:12.7px;line-height:15px;color:#333">300.00</div>
<div class="t" style="left:723.7px;top:305.40px;width:115.1px;text-align:right;font-size:12.7px;line-height:15px;color:#333">7.14</div>
<div class="t" style="left:849.6px;top:305.40px;width:115.4px;text-align:right;font-size:12.7px;line-height:15px;color:#333">291.67</div>
<div class="t" style="left:975.8px;top:305.40px;width:114.9px;text-align:right;font-size:12.7px;line-height:15px;color:#333">1.19</div>
<div class="t" style="left:1101.5px;top:305.40px;width:115.1px;text-align:right;font-size:12.7px;line-height:15px;color:#333">8.33</div>
<div class="a" style="left:0;top:330.70px;width:1575px;height:1px;background:#e4e7f2"></div>
<div class="t" style="left:11.0px;top:342.20px;font-size:12.7px;line-height:15px;color:#333">01</div>
<div class="t" style="left:136.2px;top:342.80px;font-size:12.7px;line-height:15px;color:#333">房屋及建筑物</div>
<div class="t" style="left:293.1px;top:342.20px;font-size:12.7px;line-height:15px;color:#333">000019</div>
<div class="t" style="left:451.3px;top:342.80px;font-size:12.7px;line-height:15px;color:#333">小车</div>
<div class="t" style="left:597.5px;top:342.20px;width:115.4px;text-align:right;font-size:12.7px;line-height:15px;color:#333">222.00</div>
<div class="t" style="left:723.7px;top:342.20px;width:115.1px;text-align:right;font-size:12.7px;line-height:15px;color:#333">5.28</div>
<div class="t" style="left:849.6px;top:342.20px;width:115.4px;text-align:right;font-size:12.7px;line-height:15px;color:#333">215.84</div>
<div class="t" style="left:975.8px;top:342.20px;width:114.9px;text-align:right;font-size:12.7px;line-height:15px;color:#333">0.88</div>
<div class="t" style="left:1101.5px;top:342.20px;width:115.1px;text-align:right;font-size:12.7px;line-height:15px;color:#333">6.16</div>
<div class="a" style="left:0;top:367.50px;width:1575px;height:1px;background:#e4e7f2"></div>
<div class="a" style="left:0;top:368.00px;width:1575px;height:36.8px;background:#f1f9fd"></div>
<div class="t" style="left:597.5px;top:379.00px;width:115.4px;text-align:right;font-size:12.7px;line-height:15px;color:#333">1,000,069,522.00</div>
<div class="t" style="left:723.7px;top:379.00px;width:115.1px;text-align:right;font-size:12.7px;line-height:15px;color:#333">6,499.60</div>
<div class="t" style="left:849.6px;top:379.00px;width:115.4px;text-align:right;font-size:12.7px;line-height:15px;color:#333">996,104,339.50</div>
<div class="t" style="left:975.8px;top:379.00px;width:114.9px;text-align:right;font-size:12.7px;line-height:15px;color:#333">3,958,682.90</div>
<div class="t" style="left:1101.5px;top:379.00px;width:115.1px;text-align:right;font-size:12.7px;line-height:15px;color:#333">3,965,182.50</div>
<svg class="a" style="left:113px;top:380.70px" width="14" height="14" viewBox="0 0 14 14"><rect x="0.5" y="1.8" width="13.2" height="12" rx="1.5" fill="#ac8ee9"/><path d="M3.6 0.3v3M10.6 0.3v3" stroke="#fff" stroke-width="2.2"/><path d="M3.6 0.5v2.6M10.6 0.5v2.6" stroke="#ac8ee9" stroke-width="1.2"/><path d="M4.2 7.8L7.1 5.2 10 7.8z" fill="#fff"/><rect x="4.8" y="9" width="4.6" height="2.6" fill="#fff" opacity="0.9"/></svg>
<div class="t" style="left:131.5px;top:379.20px;font-size:12.7px;line-height:15px;color:#333">合计:</div>
<div class="a" style="left:0;top:404.30px;width:1575px;height:1px;background:#e4e7f2"></div>
<div class="t" style="left:11.0px;top:415.80px;font-size:12.7px;line-height:15px;color:#333">02</div>
<div class="t" style="left:136.2px;top:416.40px;font-size:12.7px;line-height:15px;color:#333">机器、机械和其他生...</div>
<div class="t" style="left:293.1px;top:415.80px;font-size:12.7px;line-height:15px;color:#333">000003</div>
<div class="t" style="left:451.3px;top:416.40px;font-size:12.7px;line-height:15px;color:#333">激光切割机</div>
<div class="t" style="left:1448.4px;top:416.40px;font-size:12.7px;line-height:15px;color:#333">财务部</div>
<div class="a" style="left:0;top:441.10px;width:1575px;height:1px;background:#e4e7f2"></div>
<div class="t" style="left:11.0px;top:452.60px;font-size:12.7px;line-height:15px;color:#333">02</div>
<div class="t" style="left:136.2px;top:453.20px;font-size:12.7px;line-height:15px;color:#333">机器、机械和其他生...</div>
<div class="t" style="left:293.1px;top:452.60px;font-size:12.7px;line-height:15px;color:#333">000004</div>
<div class="t" style="left:451.3px;top:453.20px;font-size:12.7px;line-height:15px;color:#333">资产D</div>
<div class="t" style="left:1353.3px;top:452.60px;width:73.3px;text-align:right;font-size:12.7px;line-height:15px;color:#333">433</div>
<div class="a" style="left:0;top:477.90px;width:1575px;height:1px;background:#e4e7f2"></div>
<div class="a" style="left:124.7px;top:0;width:1px;height:368.0px;background:#e4e7f2"></div>
<div class="a" style="left:124.7px;top:404.8px;width:1px;height:110.4px;background:#e4e7f2"></div>
<div class="a" style="left:281.6px;top:0;width:1px;height:480px;background:#e4e7f2"></div>
<div class="a" style="left:439.8px;top:0;width:1px;height:480px;background:#e4e7f2"></div>
<div class="a" style="left:597.0px;top:0;width:1px;height:480px;background:#e4e7f2"></div>
<div class="a" style="left:723.2px;top:0;width:1px;height:480px;background:#e4e7f2"></div>
<div class="a" style="left:849.1px;top:0;width:1px;height:480px;background:#e4e7f2"></div>
<div class="a" style="left:975.3px;top:0;width:1px;height:480px;background:#e4e7f2"></div>
<div class="a" style="left:1101.0px;top:0;width:1px;height:480px;background:#e4e7f2"></div>
<div class="a" style="left:1226.9px;top:0;width:1px;height:480px;background:#e4e7f2"></div>
<div class="a" style="left:1352.8px;top:0;width:1px;height:480px;background:#e4e7f2"></div>
<div class="a" style="left:1436.9px;top:0;width:1px;height:480px;background:#e4e7f2"></div>
<div class="a" style="left:1563.1px;top:0;width:1px;height:480px;background:#e4e7f2"></div>
</div>
<div class="a" style="left:257px;top:888px;width:1575px;height:8px;background:#e9e9e9;border-radius:4px"></div>
<div class="a" style="left:257px;top:888px;width:1459px;height:8px;background:#b0b0b0;border-radius:4px"></div>
<div class="t " style="left:264px;top:910.5px;font-size:12.3px;line-height:15px;color:#444;">每页</div>
<div class="a" style="left:299px;top:905px;width:61px;height:28px;border:1px solid #c9c9c9;border-radius:3px;background:#fff"></div>
<div class="t " style="left:303px;top:911.5px;font-size:13px;line-height:16px;color:#111;">20</div>
<svg class="a" style="left:346px;top:914px;" width="12" height="8" viewBox="0 0 12 8" fill="none"><path d="M1 1.2L6 6.5 11 1.2" stroke="#333" stroke-width="1.3"/></svg>
<div class="t " style="left:370px;top:910.5px;font-size:12.3px;line-height:15px;color:#555;letter-spacing:0.6px">条，共 26 条</div>
<div class="t " style="left:1680px;top:911px;font-size:14px;line-height:16px;color:#3fc6dd;">1</div>
<div class="t " style="left:1724px;top:911px;font-size:14px;line-height:16px;color:#444;">2</div>
<div class="a" style="left:1756px;top:902px;width:63px;height:32px;border:1px solid #dcdcdc;border-radius:3px;background:#fff"></div>
<div class="t " style="left:1756px;top:910px;font-size:13px;line-height:15px;color:#444;width:63px;text-align:center">下一页</div>
<div class="a" style="left:1832px;top:205px;width:19px;height:32px;background:#e3e7f1;box-shadow:-1px 1px 3px rgba(0,0,0,0.12)"></div>
<svg class="a" style="left:1835px;top:213px;" width="13" height="13" viewBox="0 0 13 13" fill="none"><path d="M1 1l5 5-5 5M6 1l5 5-5 5" stroke="#b9bfcc" stroke-width="1.1"/></svg>
<div class="a" style="left:1851px;top:205px;width:63px;height:465px;background:#fff;box-shadow:0 1px 4px rgba(0,0,0,0.18)"></div>
<div class="t " style="left:1859px;top:217px;font-size:11px;line-height:13px;color:#333;">月份选择</div>
<div class="a" style="left:1856px;top:235px;width:52px;height:21px;background:#f5f5f5"></div>
<div class="t " style="left:1856px;top:237px;font-size:13px;line-height:17px;color:#111;width:52px;text-align:center;font-weight:bold">2023.12</div>
<div class="a" style="left:1851px;top:263px;width:63px;height:12px;background:linear-gradient(rgba(0,0,0,0.07),rgba(0,0,0,0))"></div>
<div class="a" style="left:1873px;top:279px;width:21px;height:21px;border-radius:50%;background:#3fc6dd"></div>
<svg class="a" style="left:1877px;top:283px;" width="13" height="13" viewBox="0 0 13 13" fill="none"><path d="M2 6.5l4.5-4.5L11 6.5M2 11l4.5-4.5L11 11" stroke="#fff" stroke-width="1.9"/></svg>
<div class="a" style="left:1830px;top:299.5px;width:37px;height:14px;background:#95d100;border-radius:7px"></div>
<div class="t " style="left:1830px;top:299.5px;font-size:13.2px;line-height:14px;color:#fff;width:37px;text-align:center;font-weight:bold;letter-spacing:-0.2px">2023</div>
<div class="t " style="left:1853px;top:308.7px;font-size:12.4px;line-height:15px;color:#333;width:63px;text-align:center;font-weight:bold">1月</div>
<div class="t " style="left:1853px;top:336.0px;font-size:12.4px;line-height:15px;color:#333;width:63px;text-align:center;font-weight:bold">2月</div>
<div class="t " style="left:1853px;top:363.3px;font-size:12.4px;line-height:15px;color:#333;width:63px;text-align:center;font-weight:bold">3月</div>
<div class="t " style="left:1853px;top:390.59999999999997px;font-size:12.4px;line-height:15px;color:#333;width:63px;text-align:center;font-weight:bold">4月</div>
<div class="t " style="left:1853px;top:417.9px;font-size:12.4px;line-height:15px;color:#333;width:63px;text-align:center;font-weight:bold">5月</div>
<div class="t " style="left:1853px;top:445.2px;font-size:12.4px;line-height:15px;color:#333;width:63px;text-align:center;font-weight:bold">6月</div>
<div class="t " style="left:1853px;top:472.5px;font-size:12.4px;line-height:15px;color:#333;width:63px;text-align:center;font-weight:bold">7月</div>
<div class="t " style="left:1853px;top:499.8px;font-size:12.4px;line-height:15px;color:#333;width:63px;text-align:center;font-weight:bold">8月</div>
<div class="t " style="left:1853px;top:527.1px;font-size:12.4px;line-height:15px;color:#333;width:63px;text-align:center;font-weight:bold">9月</div>
<div class="t " style="left:1853px;top:554.4000000000001px;font-size:12.4px;line-height:15px;color:#333;width:63px;text-align:center;font-weight:bold">10月</div>
<div class="t " style="left:1853px;top:581.7px;font-size:12.4px;line-height:15px;color:#333;width:63px;text-align:center;font-weight:bold">11月</div>
<div class="a" style="left:1859px;top:604px;width:49px;height:26px;background:#3fc6dd;border-radius:13px"></div>
<div class="t " style="left:1859.5px;top:609.0px;font-size:12.4px;line-height:15px;color:#fff;width:49px;text-align:center;font-weight:bold">12月</div>
<div class="a" style="left:1873px;top:634px;width:21px;height:21px;border-radius:50%;background:#d4d4d4"></div>
<svg class="a" style="left:1877px;top:638px;" width="13" height="13" viewBox="0 0 13 13" fill="none"><path d="M2 2l4.5 4.5L11 2M2 6.5L6.5 11 11 6.5" stroke="#fff" stroke-width="1.9"/></svg>
<div class="a" style="left:240px;top:216px;width:1674.5px;height:198.5px;border:5px solid #fc1a0e;border-radius:4px"></div>
</body></html>
